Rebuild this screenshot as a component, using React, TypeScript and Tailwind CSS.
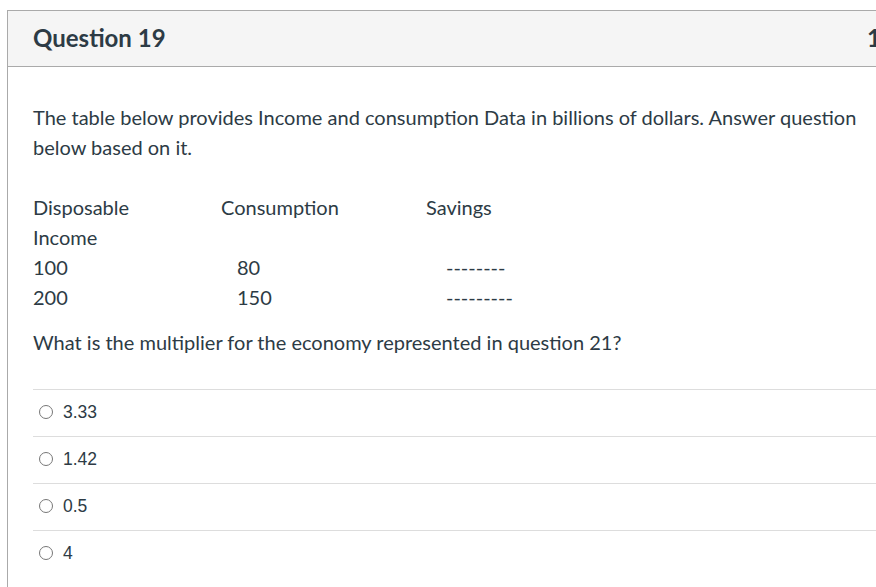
import React from "react";

const answers = ["3.33", "1.42", "0.5", "4"];

export default function App() {
  return (
    <div className="w-[876px] h-[587px] overflow-hidden bg-white pt-[10px] pl-[7px]" style={{ fontFamily: "Lato, 'Noto Sans', sans-serif" }}>
      <div className="w-[960px] border border-[#aaaaaa] text-[#2d3b45]">
        <div className="h-[56px] bg-[#f5f5f5] border-b border-[#aaaaaa] flex items-center pl-[25px] pb-[2px]">
          <div className="w-[834px] text-[24px] font-bold">Question 19</div>
          <div className="text-[24px] font-bold">1 pts</div>
        </div>
        <div className="pl-[25px] pt-[35px] pb-[20px] text-[20px] leading-[30px]">
          <p className="w-[830px]">
            The table below provides Income and consumption Data in billions of dollars. Answer question below based on it.
          </p>
          <div className="mt-[30px] grid grid-cols-[188px_205px_200px]">
            <div>Disposable</div>
            <div>Consumption</div>
            <div>Savings</div>
            <div>Income</div>
            <div></div>
            <div></div>
            <div>100</div>
            <div className="pl-[16px]">80</div>
            <div className="pl-[20px]">--------</div>
            <div>200</div>
            <div className="pl-[16px]">150</div>
            <div className="pl-[20px]">---------</div>
          </div>
          <p className="mt-[15px]">What is the multiplier for the economy represented in question 21?</p>
          <div className="mt-[32px]" style={{ fontFamily: "'Liberation Sans', Arial, sans-serif" }}>
            {answers.map((a) => (
              <div key={a} className="h-[47px] border-t border-[#dddddd] flex items-center pl-[6px] pb-[3px] text-[17.5px]">
                <span className="w-[14px] h-[14px] rounded-full border border-[#777777] mr-[10px]" />
                <span>{a}</span>
              </div>
            ))}
          </div>
        </div>
      </div>
    </div>
  );
}
